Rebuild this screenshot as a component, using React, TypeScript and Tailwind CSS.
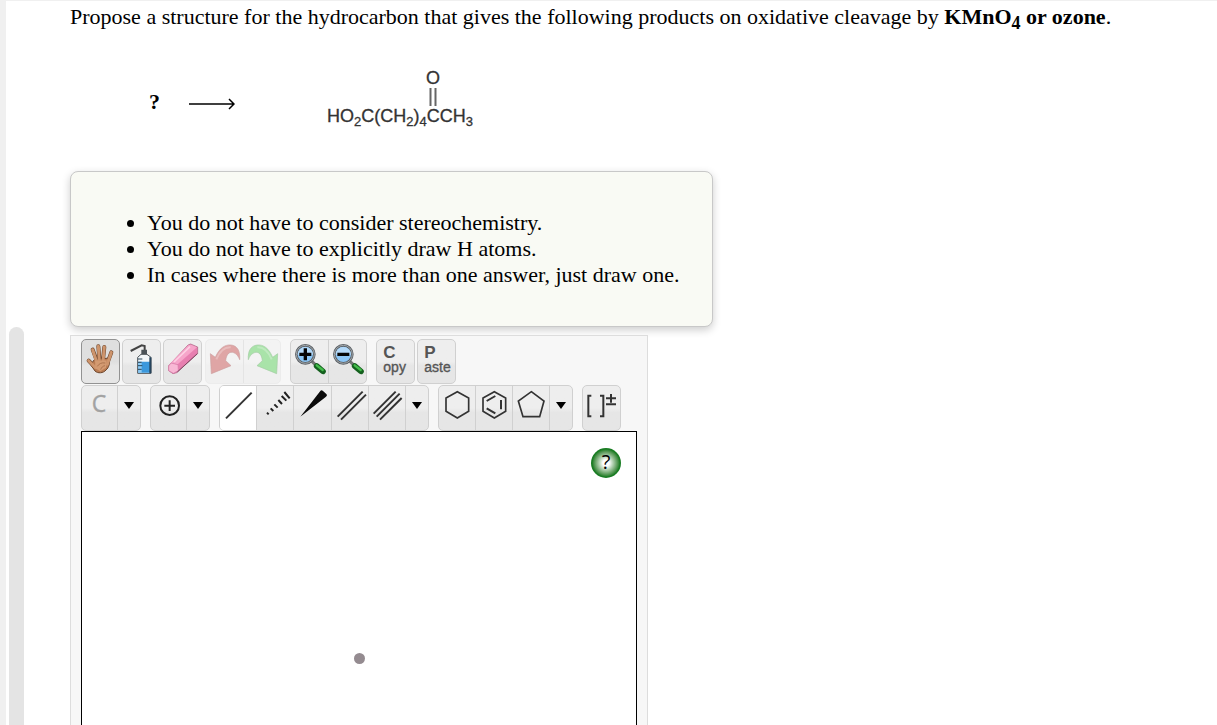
import React from 'react';

interface IconProps {
  children: React.ReactNode;
}

const Icon: React.FC<IconProps> = ({ children }) => (
  <svg viewBox="0 0 90 90" className="h-[30px] w-[30px] shrink-0 overflow-visible" fill="none" aria-hidden="true">
    {children}
  </svg>
);

const HandIcon = () => (
  <Icon>
    <g stroke="#6d452b" strokeLinecap="round" strokeWidth="12">
      <path d="M8 50l19 20M20 17l12 32M37 7l3 38M55 9l-4 38M76 25l-11 30" />
    </g>
    <path d="M25 47l44-5c4 14 0 29-9 36-8 10-25 11-33 3L14 62z" fill="#b97b52" stroke="#6d452b" strokeWidth="3" />
    <g stroke="#cd946c" strokeLinecap="round" strokeWidth="9">
      <path d="M8 50l19 20M20 17l12 37M37 7l3 43M55 9l-4 43M76 25l-12 36" />
    </g>
    <path d="M28 52l34-3-2 22-17 11-16-9z" fill="#d39a71" />
    <path d="M34 67c5-8 13-12 24-10M44 77c2-7 7-11 13-12" stroke="#9a6240" strokeWidth="2" />
  </Icon>
);

const BottleIcon = () => (
  <Icon>
    <path d="M11 21L44 4l9 2v14" stroke="#444" strokeWidth="6" />
    <path d="M43 17h17v14H43z" fill="#4b5359" />
    <path d="M32 40l10-9h18l12 9v48H32z" fill="#f2f6f9" stroke="#4a5157" strokeWidth="3" />
    <path d="M34 53h36v33H34z" fill="#3b98dc" />
    <path d="M34 53h10v33H34z" fill="#8dcaf3" />
    <path d="M67 40h6v48h-6z" fill="#26445c" />
    <path d="M33 45h13M33 55h11M33 65h13M33 76h11" stroke="#29465b" strokeWidth="3" />
  </Icon>
);

const EraserIcon = () => (
  <Icon>
    <path d="M2 65L60 3l8-3 21 9v20L26 86l-11 3L2 80z" fill="#e77fb0" stroke="#a7607f" strokeWidth="2" />
    <path d="M8 57L61 4l8-2 18 8-58 51z" fill="#f6a5ca" />
    <path d="M2 66l7-9 21 5 1 18-15 8L2 80z" fill="#f8b8d5" stroke="#d77ba8" strokeWidth="2" />
    <path d="M18 54L66 8" stroke="#fcd0e3" strokeWidth="5" />
    <path d="M28 84l60-55" stroke="#7b4660" strokeWidth="3" />
  </Icon>
);

const UndoIcon = () => (
  <Icon>
    <path
      d="M4 89L1 29l15 11C27 13 45 1 63 3c19 2 28 18 26 44-6-18-20-25-30-21-7 3-11 13-12 24l16 15z"
      fill="#dfa5a5"
      stroke="#cda0a0"
      strokeWidth="2"
    />
    <path d="M19 46C30 20 45 9 62 10" stroke="#e8bcbc" strokeWidth="6" />
  </Icon>
);

const RedoIcon = () => (
  <Icon>
    <path
      d="M86 89l3-60-15 11C63 13 46 1 28 3 9 5-1 20 1 47c6-18 20-25 30-21 7 3 11 13 12 24L27 65z"
      fill="#a9e3a9"
      stroke="#a4cca4"
      strokeWidth="2"
    />
    <path d="M71 46C60 20 45 9 28 10" stroke="#bfeabf" strokeWidth="6" />
  </Icon>
);

const ZoomIcon = ({ plus }: { plus?: boolean }) => (
  <Icon>
    <path d="M51 52l15 15" stroke="#777" strokeWidth="9" />
    <path d="M65 66l19 16" stroke="#14601e" strokeWidth="17" strokeLinecap="round" />
    <path d="M65 64l18 14" stroke="#44bd4b" strokeWidth="7" strokeLinecap="round" />
    <circle cx="31" cy="31" r="27" fill="#8cc6f6" stroke="#5b6065" strokeWidth="8" />
    <circle cx="31" cy="31" r="27" stroke="#a2a8ac" strokeWidth="3" />
    <path d="M8 32a23 23 0 0 1 46 0z" fill="#b4d9f8" />
    <path d={plus ? 'M13 31h36M31 13v36' : 'M13 31h36'} stroke="#050505" strokeWidth="10" />
  </Icon>
);

const LetterIcon = ({ first, rest }: { first: string; rest: string }) => (
  <Icon>
    <g fill="#555" fontFamily="'Liberation Sans', sans-serif">
      <text x="7" y="41" fontSize="51" fontWeight="700">{first}</text>
      <text x="7" y="84" fontSize="42" stroke="#555" strokeWidth="1">{rest}</text>
    </g>
  </Icon>
);

const CarbonIcon = () => (
  <Icon>
    <text x="17" y="67" fontSize="69" fill="#a2a2a2" stroke="#a2a2a2" fontFamily="'Open Sans', sans-serif">C</text>
  </Icon>
);

const ChargeIcon = () => (
  <Icon>
    <circle cx="44" cy="47" r="28" stroke="#222" strokeWidth="6" />
    <path d="M28 47h32M44 31v32" stroke="#222" strokeWidth="6" />
  </Icon>
);

const SingleBondIcon = () => (
  <Icon>
    <path d="M6 85L83 8" stroke="#333" strokeWidth="6" />
  </Icon>
);

const HashBondIcon = () => (
  <Icon>
    <path
      d="M18 68l5 5M29 55l8 8M40 43l10 10M52 30l11 12M62 18l14 14M70 6l16 19"
      stroke="#222"
      strokeWidth="6"
    />
  </Icon>
);

const WedgeBondIcon = () => (
  <Icon>
    <path d="M7 80L67 3c2-3 5-3 8 0l10 9c3 3 2 6-1 8z" fill="#0b0b0b" />
  </Icon>
);

const DoubleBondIcon = () => (
  <Icon>
    <path d="M5 80L80 5M15 89l75-75" stroke="#333" strokeWidth="6" />
  </Icon>
);

const TripleBondIcon = () => (
  <Icon>
    <path d="M2 71L68 5M11 80L80 11M21 89l65-65" stroke="#333" strokeWidth="6" />
  </Icon>
);

const HexagonIcon = () => (
  <Icon>
    <path d="M43 5l34 19v40L43 84 9 64V24z" stroke="#333" strokeWidth="5" />
  </Icon>
);

const BenzeneIcon = () => (
  <Icon>
    <path d="M43 5l34 19v40L43 84 9 64V24z" stroke="#333" strokeWidth="5" />
    <path d="M20 33l26-15M20 55l26 15M63 30v28" stroke="#333" strokeWidth="6" />
  </Icon>
);

const PentagonIcon = () => (
  <Icon>
    <path d="M43 5l38 28-13 47H18L4 33z" stroke="#333" strokeWidth="5" />
  </Icon>
);

const BracketIcon = () => (
  <Icon>
    <path d="M13 17H4v62h9M39 17h10v62H39" stroke="#333" strokeWidth="6" />
    <path d="M57 25h30M72 12v26M57 43h30" stroke="#333" strokeWidth="6" />
  </Icon>
);

interface ToolProps {
  label: string;
  children: React.ReactNode;
  active?: boolean;
}

const Tool: React.FC<ToolProps> = ({ label, children, active }) => (
  <button
    type="button"
    aria-label={label}
    title={label}
    className={`flex min-w-0 flex-1 items-start pl-1 pt-1 ${active ? 'bg-white' : ''}`}
  >
    {children}
  </button>
);

const MoreButton = ({ label }: { label: string }) => (
  <button type="button" aria-label={label} className="flex w-[22px] shrink-0 items-start justify-center pt-4">
    <svg viewBox="0 0 10 7" className="h-[7px] w-2.5" aria-hidden="true">
      <path d="M0 0h10L5 7z" fill="#000" />
    </svg>
  </button>
);

interface GroupProps {
  width?: string;
  pressed?: boolean;
  disabled?: boolean;
  children: React.ReactNode;
}

const Group: React.FC<GroupProps> = ({ width = 'w-[39px]', pressed, disabled, children }) => {
  let look = 'border-[#d0d0d0] divide-[#d0d0d0] from-[#eeeeee] to-[#e6e6e6]';
  if (pressed) look = 'border-[#929292] divide-[#929292] from-[#dfdfdf] to-[#e6e6e6]';
  if (disabled) look = 'border-[#ececec] divide-[#e4e4e4] from-[#f3f3f3] to-[#f0f0f0]';
  return (
    <div
      className={`flex shrink-0 divide-x overflow-hidden rounded-[5px] border bg-linear-to-b from-50% to-60% ${width} ${look}`}
    >
      {children}
    </div>
  );
};

const Toolbar = () => (
  <div className="flex flex-col gap-px px-2.5">
    <div className="flex h-[45px] gap-[9px]">
      <div className="flex gap-[3px]">
        <div className="flex gap-0.5">
          <Group pressed><Tool label="Move"><HandIcon /></Tool></Group>
          <Group><Tool label="Clear all"><BottleIcon /></Tool></Group>
          <Group><Tool label="Erase"><EraserIcon /></Tool></Group>
        </div>
        <Group width="w-[76px]" disabled>
          <Tool label="Undo"><UndoIcon /></Tool>
          <Tool label="Redo"><RedoIcon /></Tool>
        </Group>
      </div>
      <Group width="w-[77px]">
        <Tool label="Zoom in"><ZoomIcon plus /></Tool>
        <Tool label="Zoom out"><ZoomIcon /></Tool>
      </Group>
      <div className="flex gap-0.5">
        <Group><Tool label="Copy"><LetterIcon first="C" rest="opy" /></Tool></Group>
        <Group><Tool label="Paste"><LetterIcon first="P" rest="aste" /></Tool></Group>
      </div>
    </div>

    <div className="flex h-[46px] gap-[9px]">
      <Group width="w-[60px]">
        <Tool label="Carbon"><CarbonIcon /></Tool>
        <MoreButton label="More elements" />
      </Group>
      <Group width="w-[60px]">
        <Tool label="Increase charge"><ChargeIcon /></Tool>
        <MoreButton label="More charges" />
      </Group>
      <Group width="w-[210px]">
        <Tool label="Single bond" active><SingleBondIcon /></Tool>
        <Tool label="Hash bond"><HashBondIcon /></Tool>
        <Tool label="Wedge bond"><WedgeBondIcon /></Tool>
        <Tool label="Double bond"><DoubleBondIcon /></Tool>
        <Tool label="Triple bond"><TripleBondIcon /></Tool>
        <MoreButton label="More bonds" />
      </Group>
      <Group width="w-[135px]">
        <Tool label="Cyclohexane"><HexagonIcon /></Tool>
        <Tool label="Benzene"><BenzeneIcon /></Tool>
        <Tool label="Cyclopentane"><PentagonIcon /></Tool>
        <MoreButton label="More rings" />
      </Group>
      <Group><Tool label="Brackets"><BracketIcon /></Tool></Group>
    </div>
  </div>
);

const Product = () => (
  <svg viewBox="0 0 150 64" className="h-16 w-[150px]" role="img" aria-label="Product structure">
    <g fill="#333" stroke="#333" strokeWidth="0.3" fontFamily="'Liberation Sans', sans-serif" fontSize="18">
      <text x="99" y="18">O</text>
      <text x="0" y="56">
        HO<tspan dy="4" fontSize="13">2</tspan>
        <tspan dy="-4">C(CH</tspan><tspan dy="4" fontSize="13">2</tspan>
        <tspan dy="-4">)</tspan><tspan dy="4" fontSize="13">4</tspan>
        <tspan dy="-4">CCH</tspan><tspan dy="4" fontSize="13">3</tspan>
      </text>
    </g>
    <path d="M103.5 22v18M108.5 22v18" stroke="#666" strokeWidth="2" />
  </svg>
);

const hints = [
  'You do not have to consider stereochemistry.',
  'You do not have to explicitly draw H atoms.',
  'In cases where there is more than one answer, just draw one.',
];

const App: React.FC = () => (
  <div className="flex h-screen overflow-hidden border-t border-[#f0f0f0] bg-white font-['Liberation_Serif',serif] text-[22px] leading-[26px] text-black">
    <div className="w-1.5 shrink-0 bg-[#f0f0f0]" />
    <div className="ml-[3px] flex w-[15px] shrink-0 flex-col pt-[326px]">
      <div className="flex-1 rounded-t-full bg-[#e4e4e4]" />
    </div>

    <main className="ml-[46px] flex min-w-0 flex-1 flex-col items-start pt-[3px]">
      <p className="h-[26px] whitespace-nowrap">
        Propose a structure for the hydrocarbon that gives the following products on oxidative cleavage by{' '}
        <b>KMnO<sub className="text-[18px]">4</sub> or ozone</b>.
      </p>

      <div className="mt-9 flex h-16 items-center pl-[79px]">
        <div className="flex items-center gap-[29px] pt-2">
          <b>?</b>
          <svg viewBox="0 0 46 12" className="mt-1 h-3 w-[46px]" fill="none" aria-hidden="true">
            <path d="M0 6h45M40 1l5 5-5 5" stroke="#000" strokeWidth="1.5" />
          </svg>
        </div>
        <div className="ml-[92px]">
          <Product />
        </div>
      </div>

      <section className="mt-[41px] w-[643px] max-w-full rounded-lg border border-[#c8c8c8] bg-[#f9faf4] py-[38px] pl-[76px] pr-5 shadow-[0_3px_8px_rgba(0,0,0,0.2)]">
        <ul className="list-disc">
          {hints.map((hint) => (
            <li key={hint}>{hint}</li>
          ))}
        </ul>
      </section>

      <section className="mt-2 flex min-h-0 w-[578px] flex-1 flex-col border border-b-0 border-[#ddd] bg-[#f7f7f7] pt-[3px]">
        <Toolbar />
        <div className="relative mx-2.5 flex-1 border border-b-0 border-black bg-white">
          <button
            type="button"
            aria-label="Help"
            className="absolute right-[15px] top-4 flex h-[30px] w-[30px] items-start justify-center rounded-full bg-radial from-white from-15% to-[#187c22] to-65% pt-0.5 font-['Open_Sans',sans-serif] text-xl leading-6 text-black"
          >
            ?
          </button>
          <span className="absolute left-[272px] top-[221px] h-[11px] w-[11px] rounded-full bg-[#948b90]" />
        </div>
      </section>
    </main>
  </div>
);

export default App;
